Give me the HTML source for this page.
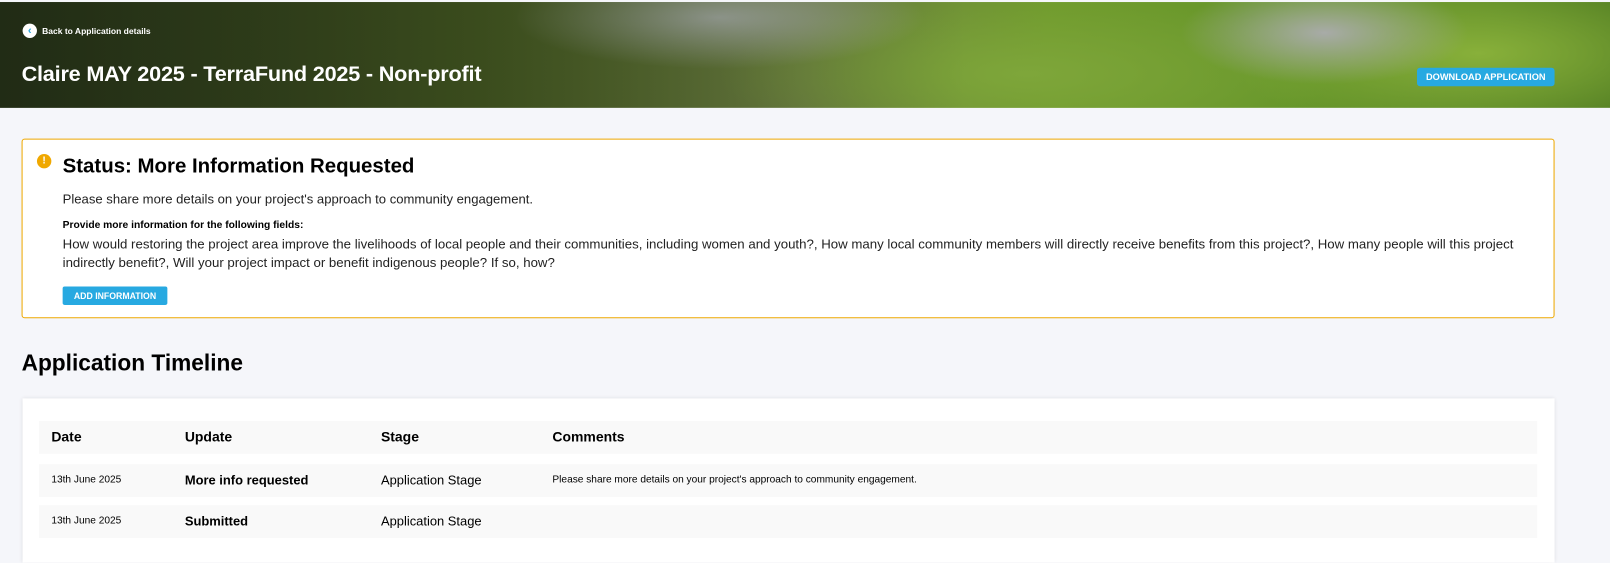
<!DOCTYPE html>
<html><head><style>
*{box-sizing:border-box;margin:0;padding:0}
html,body{width:1610px;height:542px;overflow:hidden;background:#f5f6fa}
body{font-family:"Liberation Sans",Arial,sans-serif;color:#000}
.wrap{position:absolute;left:0;top:0;width:1568px;height:528px;transform:scale(1.0268);transform-origin:0 0}
.hdr{position:absolute;left:0;top:2px;width:1568px;height:103px;overflow:hidden;
background:
linear-gradient(90deg,rgba(20,30,15,.6) 0%,rgba(30,45,15,.35) 35%,rgba(0,0,0,0) 60%),
radial-gradient(ellipse 200px 50px at 700px 15px,#a9aea9 0%,rgba(170,175,170,0) 100%),
radial-gradient(ellipse 140px 50px at 1290px 30px,#a8aba8 0%,rgba(170,175,170,0) 100%),
radial-gradient(ellipse 300px 80px at 1000px 70px,#7ea63a 0%,rgba(120,160,50,0) 100%),
radial-gradient(ellipse 250px 80px at 1440px 50px,#88b03a 0%,rgba(120,160,50,0) 100%),
linear-gradient(90deg,#34401e 0%,#4e6226 30%,#6e8044 50%,#6f9a2c 65%,#66962a 80%,#507c22 100%);}
.back{position:absolute;left:22px;top:21px;display:flex;align-items:center;color:#fff;font-size:8.3px;font-weight:bold}
.back span.c{width:14px;height:14px;border-radius:50%;background:#fff;margin-right:5px;display:inline-flex;align-items:center;justify-content:center;color:#27a5dc;font-size:11px;line-height:14px}
h1{position:absolute;left:21px;top:59px;color:#fff;font-size:21.1px;font-weight:bold;letter-spacing:-.2px}
.dl{position:absolute;left:1380px;top:64px;width:134px;height:18px;background:#27a9e1;color:#fff;border-radius:3px;font-size:9px;font-weight:bold;text-align:center;line-height:18px}
.card{position:absolute;left:21px;top:135px;width:1493px;height:175px;background:#fff;border:1px solid #eea800;border-radius:3px}
.ic{position:absolute;left:14px;top:14px;width:14px;height:14px;border-radius:50%;background:#f0a800;color:#fff;font-size:10px;font-weight:bold;text-align:center;line-height:14px}
.card h2{position:absolute;left:39px;top:15px;font-size:19.9px;font-weight:bold}
.p1{position:absolute;left:39px;top:50px;font-size:12.75px;color:#222}
.p2{position:absolute;left:39px;top:78px;font-size:10px;font-weight:bold}
.p3{position:absolute;left:39px;top:93px;width:1445px;font-size:12.9px;line-height:18px;color:#222}
.add{position:absolute;left:39px;top:143px;width:102px;height:18px;background:#27a9e1;color:#fff;border-radius:2px;font-size:8.5px;font-weight:bold;text-align:center;line-height:18px}
.tt{position:absolute;left:21px;top:341px;font-size:22.1px;font-weight:bold}
.tl{position:absolute;left:22px;top:388px;width:1492px;height:160px;background:#fff;box-shadow:0 0 4px rgba(0,0,0,.12)}
.row{position:absolute;left:16px;width:1459px;height:32px;background:#f9f9f9;font-size:12.6px}
.row div{position:absolute;top:0;line-height:32px}
.d{font-size:9.9px}
</style></head><body><div class="wrap">
<div class="hdr">
<div class="back"><span class="c">&#8249;</span>Back to Application details</div>
<h1>Claire MAY 2025 - TerraFund 2025 - Non-profit</h1>
<div class="dl">DOWNLOAD APPLICATION</div>
</div>
<div class="card">
<div class="ic">!</div>
<h2>Status: More Information Requested</h2>
<div class="p1">Please share more details on your project's approach to community engagement.</div>
<div class="p2">Provide more information for the following fields:</div>
<div class="p3">How would restoring the project area improve the livelihoods of local people and their communities, including women and youth?, How many local community members will directly receive benefits from this project?, How many people will this project indirectly benefit?, Will your project impact or benefit indigenous people? If so, how?</div>
<div class="add">ADD INFORMATION</div>
</div>
<div class="tt">Application Timeline</div>
<div class="tl">
<div class="row" style="top:22px;font-weight:bold;font-size:13.6px"><div style="left:12px">Date</div><div style="left:142px">Update</div><div style="left:333px">Stage</div><div style="left:500px">Comments</div></div>
<div class="row" style="top:64px"><div class="d" style="left:12px">13th June 2025</div><div style="left:142px;font-weight:bold">More info requested</div><div style="left:333px">Application Stage</div><div class="d" style="left:500px">Please share more details on your project's approach to community engagement.</div></div>
<div class="row" style="top:104px"><div class="d" style="left:12px">13th June 2025</div><div style="left:142px;font-weight:bold">Submitted</div><div style="left:333px">Application Stage</div></div>
</div>
</div></body></html>
